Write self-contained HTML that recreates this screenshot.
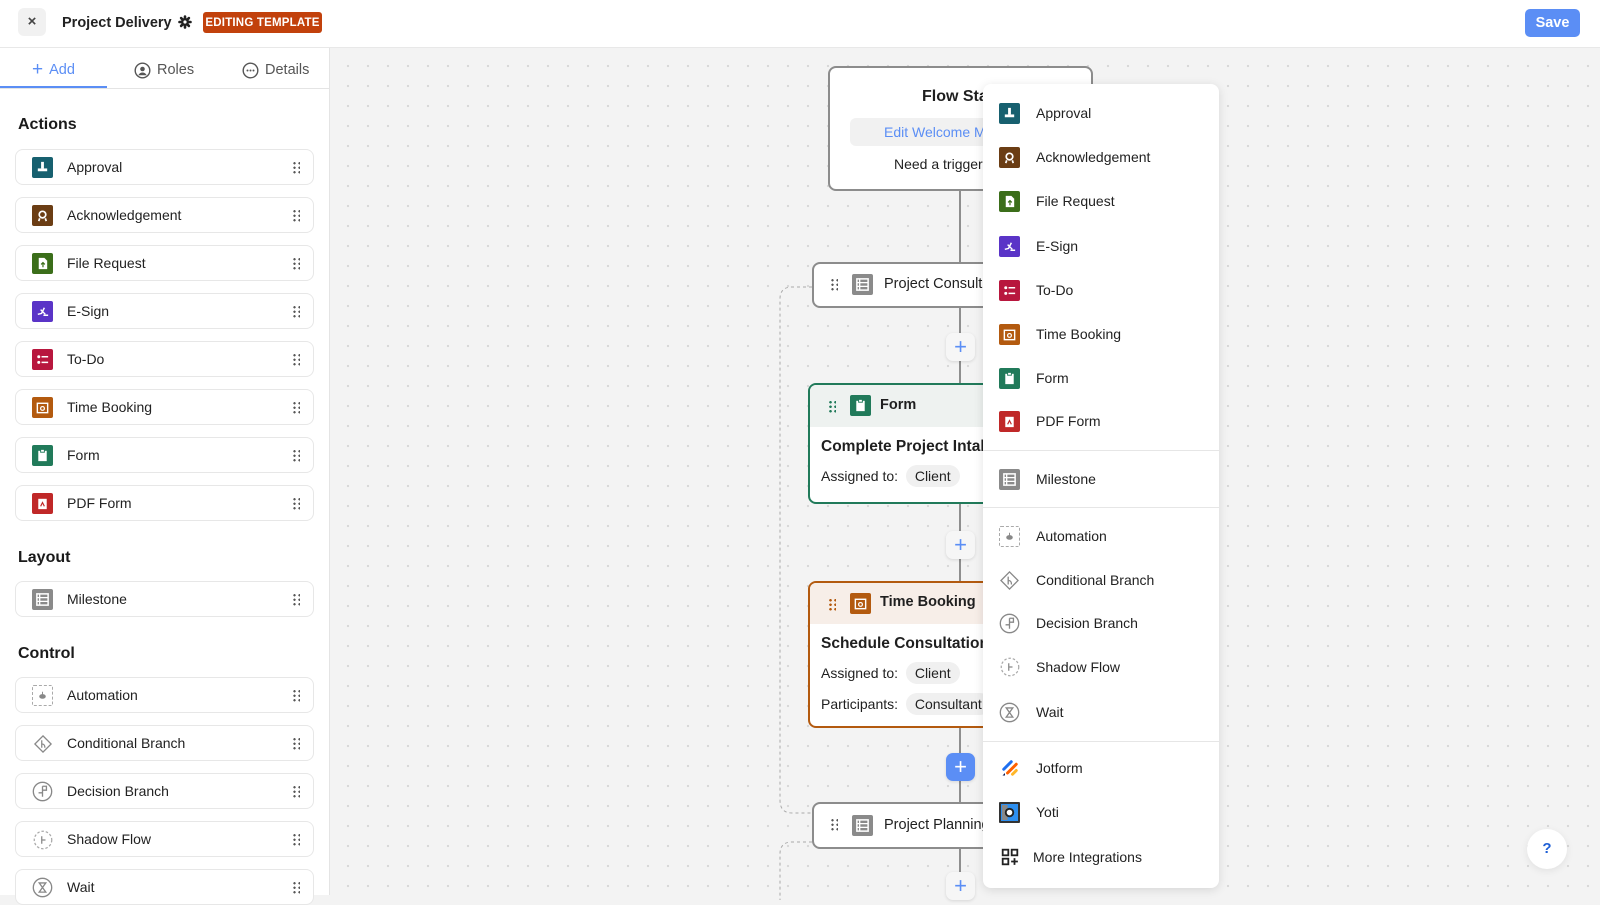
<!DOCTYPE html>
<html><head><meta charset="utf-8">
<style>
*{box-sizing:border-box;margin:0;padding:0}
body{width:1600px;height:895px;overflow:hidden;font-family:"Liberation Sans",Arial,sans-serif;color:#1f1f1f;background:#f3f3f3;position:relative}
.abs{position:absolute}
#hdr{left:0;top:0;width:1600px;height:48px;background:#fff;border-bottom:1px solid #e8e8e8}
#canvas{left:330px;top:48px;width:1270px;height:847px;background-color:#f3f3f3;background-image:radial-gradient(#d6d6d6 1px,transparent 1.3px);background-size:20px 20px;background-position:8px 8px}
#side{left:0;top:48px;width:330px;height:847px;background:#fff;border-right:1px solid #e4e4e4}
.tab{position:absolute;top:2px;height:40px;line-height:40px;font-size:14.5px;color:#555;display:flex;align-items:center;gap:6px}
.sec{position:absolute;left:18px;font-size:16px;font-weight:bold;color:#1a1a1a}
.item{position:absolute;left:15px;width:299px;height:36px;border:1px solid #e7e7e7;border-radius:8px;background:#fff}
.item .ic{position:absolute;left:16px;top:7px}
.item span{position:absolute;left:51px;top:9px;font-size:14px;color:#222}
.drag{position:absolute;right:13px;top:11px;width:8px;height:13px;background-image:radial-gradient(#555 1.1px,transparent 1.4px);background-size:5px 4.5px}
.ic{width:21px;height:21px;border-radius:2px;display:flex;align-items:center;justify-content:center}
.ic svg{width:15px;height:15px}
.menu{left:983px;top:84px;width:236px;height:804px;background:#fff;border-radius:8px;box-shadow:0 2px 10px rgba(0,0,0,.12)}
.mi{position:absolute;left:16px;height:22px;display:flex;align-items:center}
.mi span{position:absolute;left:37px;font-size:14px;color:#222;white-space:nowrap}
.mdiv{position:absolute;left:0;width:236px;height:1px;background:#e6e6e6}
.card{position:absolute;background:#fff;border:2px solid #8c8c8c;border-radius:8px;overflow:hidden}
.vl{position:absolute;left:959px;width:2px;background:#8e8e8e}
.plus{position:absolute;left:946px;width:29px;height:28px;border-radius:7px;background:#f6f6f6;box-shadow:0 1px 3px rgba(0,0,0,.12);color:#5b8ef5;font-size:22px;line-height:27px;text-align:center;font-weight:300}
.chip{display:inline-block;background:#f0f0f0;border-radius:12px;padding:3px 9px;color:#222}
</style></head><body>

<div id="canvas" class="abs"></div>

<svg class="abs" style="left:770px;top:280px" width="60" height="620">
<path d="M42 7 H22 Q10 7 10 19 V520 Q10 533 22 533 H42" fill="none" stroke="#aaa" stroke-dasharray="3 3" stroke-width="1"/>
<path d="M42 562 H22 Q10 562 10 574 V620" fill="none" stroke="#aaa" stroke-dasharray="3 3" stroke-width="1"/>
</svg>

<div class="vl" style="top:191px;height:71px"></div>
<div class="vl" style="top:308px;height:75px"></div>
<div class="vl" style="top:504px;height:77px"></div>
<div class="vl" style="top:728px;height:74px"></div>
<div class="vl" style="top:849px;height:46px"></div>
<div class="plus" style="top:333px">+</div>
<div class="plus" style="top:531px">+</div>
<div class="plus" style="top:753px;background:#5b8ef5;color:#fff">+</div>
<div class="plus" style="top:872px">+</div>

<div class="card" style="left:828px;top:66px;width:265px;height:125px;border-color:#8c8c8c">
 <div class="abs" style="left:92px;top:20px;font-size:16px;font-weight:bold">Flow Start</div>
 <div class="abs" style="left:20px;top:50px;width:225px;height:28px;background:#f1f1f1;border-radius:6px;color:#5b8ef5;font-size:14px;line-height:28px;padding-left:34px">Edit Welcome Message</div>
 <div class="abs" style="left:64px;top:88px;font-size:14px">Need a trigger?</div>
</div>

<div class="card" style="left:812px;top:262px;width:296px;height:46px">
 <div class="drag" style="left:16px;top:14px;right:auto"></div>
 <div class="ic abs" style="left:38px;top:10px;background:#8a8a8a"><svg viewBox="0 0 16 16"><rect x="2" y="2" width="12" height="12" fill="none" stroke="#fff" stroke-width="1.6"/><path d="M2 6h12M2 10h12M5 2v12" stroke="#fff" stroke-width="1.4"/></svg></div>
 <div class="abs" style="left:70px;top:12px;font-size:14.5px">Project Consultation</div>
</div>

<div class="card" style="left:808px;top:383px;width:304px;height:121px;border-color:#217a5a">
 <div class="abs" style="left:0;top:0;width:304px;height:42px;background:#eef2f0"></div>
 <div class="drag" style="left:18px;top:15px;right:auto;background-image:radial-gradient(#217a5a 1.2px,transparent 1.5px)"></div>
 <div class="ic abs" style="left:40px;top:10px;background:#217a5a"><svg viewBox="0 0 16 16"><rect x="3.5" y="3" width="9" height="11" fill="#fff"/><rect x="6" y="1.5" width="4" height="3" fill="#fff" stroke="#217a5a"/></svg></div>
 <div class="abs" style="left:70px;top:12px;font-size:14.5px;font-weight:bold">Form</div>
 <div class="abs" style="left:11px;top:53px;font-size:15.5px;font-weight:bold">Complete Project Intake</div>
 <div class="abs" style="left:11px;top:80px;font-size:14px">Assigned to: &nbsp;<span class="chip">Client</span></div>
</div>

<div class="card" style="left:808px;top:581px;width:304px;height:147px;border-color:#b35a0f">
 <div class="abs" style="left:0;top:0;width:304px;height:41px;background:#f7eee8"></div>
 <div class="drag" style="left:18px;top:15px;right:auto;background-image:radial-gradient(#b35a0f 1.2px,transparent 1.5px)"></div>
 <div class="ic abs" style="left:40px;top:10px;background:#b35a0f"><svg viewBox="0 0 16 16"><rect x="2.5" y="3.5" width="11" height="10" fill="none" stroke="#fff" stroke-width="1.5"/><circle cx="8" cy="9" r="2" fill="none" stroke="#fff" stroke-width="1.3"/></svg></div>
 <div class="abs" style="left:70px;top:11px;font-size:14.5px;font-weight:bold">Time Booking</div>
 <div class="abs" style="left:11px;top:52px;font-size:15.5px;font-weight:bold">Schedule Consultation</div>
 <div class="abs" style="left:11px;top:79px;font-size:14px">Assigned to: &nbsp;<span class="chip">Client</span></div>
 <div class="abs" style="left:11px;top:110px;font-size:14px">Participants: &nbsp;<span class="chip">Consultant</span></div>
</div>

<div class="card" style="left:812px;top:802px;width:296px;height:47px">
 <div class="drag" style="left:16px;top:14px;right:auto"></div>
 <div class="ic abs" style="left:38px;top:11px;background:#8a8a8a"><svg viewBox="0 0 16 16"><rect x="2" y="2" width="12" height="12" fill="none" stroke="#fff" stroke-width="1.6"/><path d="M2 6h12M2 10h12M5 2v12" stroke="#fff" stroke-width="1.4"/></svg></div>
 <div class="abs" style="left:70px;top:13px;font-size:14.5px">Project Planning</div>
</div>

<div id="hdr" class="abs">
 <div class="abs" style="left:18px;top:8px;width:28px;height:28px;background:#f1f1f1;border-radius:6px;text-align:center;line-height:28px;font-size:15px;color:#444;font-weight:bold">×</div>
 <div class="abs" style="left:62px;top:15px;font-size:14.5px;font-weight:bold;color:#222">Project Delivery</div>
 <svg class="abs" style="left:178px;top:15px" width="14" height="14" viewBox="0 0 14 14"><g stroke="#222" stroke-width="2.6" stroke-linecap="round"><path d="M7 1.5v11M1.5 7h11M3.1 3.1l7.8 7.8M10.9 3.1l-7.8 7.8"/></g><circle cx="7" cy="7" r="4" fill="#222"/><circle cx="7" cy="7" r="1.6" fill="#fff"/></svg>
 <div class="abs" style="left:203px;top:12px;width:119px;height:21px;background:#c2410c;border-radius:3px;color:#fff;font-size:11.5px;font-weight:bold;display:flex;align-items:center;justify-content:center;letter-spacing:.2px">EDITING TEMPLATE</div>
 <div class="abs" style="left:1525px;top:9px;width:55px;height:28px;background:#5b8ef5;border-radius:5px;color:#fff;font-size:14.5px;font-weight:bold;line-height:28px;text-align:center">Save</div>
</div>

<div id="side" class="abs">
 <div class="tab" style="left:32px;color:#5b8ef5"><span style="font-size:19px;font-weight:300">+</span> Add</div>
 <div class="abs" style="left:0;top:38px;width:107px;height:3px;background:#5b8ef5"></div>
 <div class="abs" style="left:0;top:40px;width:330px;height:1px;background:#e4e4e4"></div>
 <div class="tab" style="left:134px"><svg width="17" height="17" viewBox="0 0 17 17"><circle cx="8.5" cy="8.5" r="7.3" fill="none" stroke="#555" stroke-width="1.4"/><circle cx="8.5" cy="7" r="2.3" fill="#555"/><path d="M4.3 13.3c1-2 2.5-2.8 4.2-2.8s3.2.8 4.2 2.8" fill="#555"/></svg>Roles</div>
 <div class="tab" style="left:242px"><svg width="17" height="17" viewBox="0 0 17 17"><circle cx="8.5" cy="8.5" r="7.3" fill="none" stroke="#555" stroke-width="1.4"/><circle cx="5.5" cy="8.5" r="1" fill="#555"/><circle cx="8.5" cy="8.5" r="1" fill="#555"/><circle cx="11.5" cy="8.5" r="1" fill="#555"/></svg>Details</div>

 <div class="sec" style="top:68px">Actions</div>
 <div class="item" style="top:101px"><div class="ic" style="background:#17606f"><svg viewBox="0 0 16 16"><rect x="6.5" y="2" width="3" height="7" fill="#fff"/><rect x="3" y="9" width="10" height="3" fill="#fff"/></svg></div><span>Approval</span><div class="drag"></div></div>
 <div class="item" style="top:149px"><div class="ic" style="background:#6b3d14"><svg viewBox="0 0 16 16"><circle cx="8" cy="7" r="3.5" fill="none" stroke="#fff" stroke-width="1.8"/><path d="M5 11l-1 3M11 11l1 3" stroke="#fff" stroke-width="1.8"/></svg></div><span>Acknowledgement</span><div class="drag"></div></div>
 <div class="item" style="top:197px"><div class="ic" style="background:#3b6e1a"><svg viewBox="0 0 16 16"><path d="M4 2h6l3 3v9H4z" fill="#fff"/><path d="M8.5 12V7M6.5 9l2-2 2 2" stroke="#3b6e1a" stroke-width="1.3" fill="none"/></svg></div><span>File Request</span><div class="drag"></div></div>
 <div class="item" style="top:245px"><div class="ic" style="background:#5a34c7"><svg viewBox="0 0 16 16"><path d="M3 11l4-1 3-6M6 6l5 5M9 12h5" stroke="#fff" stroke-width="1.5" fill="none"/></svg></div><span>E-Sign</span><div class="drag"></div></div>
 <div class="item" style="top:293px"><div class="ic" style="background:#b8173e"><svg viewBox="0 0 16 16"><circle cx="4" cy="5" r="1.6" fill="#fff"/><circle cx="4" cy="11" r="1.6" fill="#fff"/><path d="M7 5h7M7 11h7" stroke="#fff" stroke-width="1.6"/></svg></div><span>To-Do</span><div class="drag"></div></div>
 <div class="item" style="top:341px"><div class="ic" style="background:#b35a0f"><svg viewBox="0 0 16 16"><rect x="2.5" y="3.5" width="11" height="10" fill="none" stroke="#fff" stroke-width="1.5"/><circle cx="8" cy="9" r="2" fill="none" stroke="#fff" stroke-width="1.3"/></svg></div><span>Time Booking</span><div class="drag"></div></div>
 <div class="item" style="top:389px"><div class="ic" style="background:#217a5a"><svg viewBox="0 0 16 16"><rect x="3.5" y="3" width="9" height="11" fill="#fff"/><rect x="6" y="1.5" width="4" height="3" fill="#fff" stroke="#217a5a"/></svg></div><span>Form</span><div class="drag"></div></div>
 <div class="item" style="top:437px"><div class="ic" style="background:#c02828"><svg viewBox="0 0 16 16"><rect x="3.5" y="3" width="9" height="11" fill="#fff"/><path d="M6 11l2-4 2 4" stroke="#c02828" stroke-width="1.2" fill="none"/></svg></div><span>PDF Form</span><div class="drag"></div></div>

 <div class="sec" style="top:501px">Layout</div>
 <div class="item" style="top:533px"><div class="ic" style="background:#8a8a8a"><svg viewBox="0 0 16 16"><rect x="2" y="2" width="12" height="12" fill="none" stroke="#fff" stroke-width="1.6"/><path d="M2 6h12M2 10h12M5 2v12" stroke="#fff" stroke-width="1.4"/></svg></div><span>Milestone</span><div class="drag"></div></div>

 <div class="sec" style="top:597px">Control</div>
 <div class="item" style="top:629px"><div class="ic" style="border:1px dashed #aaa"><svg viewBox="0 0 16 16"><ellipse cx="8" cy="9" rx="3.5" ry="2.5" fill="#888"/><path d="M8 4v3" stroke="#888"/></svg></div><span>Automation</span><div class="drag"></div></div>
 <div class="item" style="top:677px"><div class="ic"><svg viewBox="0 0 16 16" style="width:20px;height:20px"><path d="M8 1.5L14.5 8 8 14.5 1.5 8z" fill="none" stroke="#888"/><path d="M7 5v6M7 8c2 0 2.5 1 2.5 3" stroke="#888" fill="none"/></svg></div><span>Conditional Branch</span><div class="drag"></div></div>
 <div class="item" style="top:725px"><div class="ic"><svg viewBox="0 0 16 16" style="width:21px;height:21px"><circle cx="8" cy="8" r="7" fill="none" stroke="#888"/><path d="M8 4v8M8 4h3v3H8M5 9h3" stroke="#888" fill="none"/></svg></div><span>Decision Branch</span><div class="drag"></div></div>
 <div class="item" style="top:773px"><div class="ic"><svg viewBox="0 0 16 16" style="width:20px;height:20px"><circle cx="8" cy="8" r="7" fill="none" stroke="#aaa" stroke-dasharray="2 1.5"/><path d="M7 5v6M7 8h3" stroke="#888"/></svg></div><span>Shadow Flow</span><div class="drag"></div></div>
 <div class="item" style="top:821px"><div class="ic"><svg viewBox="0 0 16 16" style="width:21px;height:21px"><circle cx="8" cy="8" r="7" fill="none" stroke="#888"/><path d="M5.5 4.5h5L8 8l2.5 3.5h-5L8 8z" fill="none" stroke="#888"/></svg></div><span>Wait</span><div class="drag"></div></div>
</div>

<div class="menu abs">
 <div class="mi" style="top:18px"><div class="ic" style="background:#17606f"><svg viewBox="0 0 16 16"><rect x="6.5" y="2" width="3" height="7" fill="#fff"/><rect x="3" y="9" width="10" height="3" fill="#fff"/></svg></div><span>Approval</span></div>
 <div class="mi" style="top:62px"><div class="ic" style="background:#6b3d14"><svg viewBox="0 0 16 16"><circle cx="8" cy="7" r="3.5" fill="none" stroke="#fff" stroke-width="1.8"/><path d="M5 11l-1 3M11 11l1 3" stroke="#fff" stroke-width="1.8"/></svg></div><span>Acknowledgement</span></div>
 <div class="mi" style="top:106px"><div class="ic" style="background:#3b6e1a"><svg viewBox="0 0 16 16"><path d="M4 2h6l3 3v9H4z" fill="#fff"/><path d="M8.5 12V7M6.5 9l2-2 2 2" stroke="#3b6e1a" stroke-width="1.3" fill="none"/></svg></div><span>File Request</span></div>
 <div class="mi" style="top:151px"><div class="ic" style="background:#5a34c7"><svg viewBox="0 0 16 16"><path d="M3 11l4-1 3-6M6 6l5 5M9 12h5" stroke="#fff" stroke-width="1.5" fill="none"/></svg></div><span>E-Sign</span></div>
 <div class="mi" style="top:195px"><div class="ic" style="background:#b8173e"><svg viewBox="0 0 16 16"><circle cx="4" cy="5" r="1.6" fill="#fff"/><circle cx="4" cy="11" r="1.6" fill="#fff"/><path d="M7 5h7M7 11h7" stroke="#fff" stroke-width="1.6"/></svg></div><span>To-Do</span></div>
 <div class="mi" style="top:239px"><div class="ic" style="background:#b35a0f"><svg viewBox="0 0 16 16"><rect x="2.5" y="3.5" width="11" height="10" fill="none" stroke="#fff" stroke-width="1.5"/><circle cx="8" cy="9" r="2" fill="none" stroke="#fff" stroke-width="1.3"/></svg></div><span>Time Booking</span></div>
 <div class="mi" style="top:283px"><div class="ic" style="background:#217a5a"><svg viewBox="0 0 16 16"><rect x="3.5" y="3" width="9" height="11" fill="#fff"/><rect x="6" y="1.5" width="4" height="3" fill="#fff" stroke="#217a5a"/></svg></div><span>Form</span></div>
 <div class="mi" style="top:326px"><div class="ic" style="background:#c02828"><svg viewBox="0 0 16 16"><rect x="3.5" y="3" width="9" height="11" fill="#fff"/><path d="M6 11l2-4 2 4" stroke="#c02828" stroke-width="1.2" fill="none"/></svg></div><span>PDF Form</span></div>
 <div class="mdiv" style="top:366px"></div>
 <div class="mi" style="top:384px"><div class="ic" style="background:#8a8a8a"><svg viewBox="0 0 16 16"><rect x="2" y="2" width="12" height="12" fill="none" stroke="#fff" stroke-width="1.6"/><path d="M2 6h12M2 10h12M5 2v12" stroke="#fff" stroke-width="1.4"/></svg></div><span>Milestone</span></div>
 <div class="mdiv" style="top:423px"></div>
 <div class="mi" style="top:441px"><div class="ic" style="border:1px dashed #aaa"><svg viewBox="0 0 16 16"><ellipse cx="8" cy="9" rx="3.5" ry="2.5" fill="#888"/><path d="M8 4v3" stroke="#888"/></svg></div><span>Automation</span></div>
 <div class="mi" style="top:485px"><div class="ic"><svg viewBox="0 0 16 16" style="width:21px;height:21px"><path d="M8 1.5L14.5 8 8 14.5 1.5 8z" fill="none" stroke="#888"/><path d="M7 5v6M7 8c2 0 2.5 1 2.5 3" stroke="#888" fill="none"/></svg></div><span>Conditional Branch</span></div>
 <div class="mi" style="top:528px"><div class="ic"><svg viewBox="0 0 16 16" style="width:21px;height:21px"><circle cx="8" cy="8" r="7" fill="none" stroke="#888"/><path d="M8 4v8M8 4h3v3H8M5 9h3" stroke="#888" fill="none"/></svg></div><span>Decision Branch</span></div>
 <div class="mi" style="top:572px"><div class="ic"><svg viewBox="0 0 16 16" style="width:20px;height:20px"><circle cx="8" cy="8" r="7" fill="none" stroke="#aaa" stroke-dasharray="2 1.5"/><path d="M7 5v6M7 8h3" stroke="#888"/></svg></div><span>Shadow Flow</span></div>
 <div class="mi" style="top:617px"><div class="ic"><svg viewBox="0 0 16 16" style="width:21px;height:21px"><circle cx="8" cy="8" r="7" fill="none" stroke="#888"/><path d="M5.5 4.5h5L8 8l2.5 3.5h-5L8 8z" fill="none" stroke="#888"/></svg></div><span>Wait</span></div>
 <div class="mdiv" style="top:657px"></div>
 <div class="mi" style="top:673px"><div class="ic"><svg viewBox="0 0 16 16" style="width:20px;height:20px"><path d="M3 9l6-6" stroke="#1e6ff0" stroke-width="2.4" stroke-linecap="round"/><path d="M6 12l7-7" stroke="#ff6100" stroke-width="2.4" stroke-linecap="round"/><path d="M10 13l3-3" stroke="#ffb629" stroke-width="2.4" stroke-linecap="round"/><path d="M2 14l2-2v2z" fill="#0a1551"/></svg></div><span>Jotform</span></div>
 <div class="mi" style="top:717px"><div class="ic" style="background:#2d8ff0;border:2px solid #333;border-radius:1px"><svg viewBox="0 0 16 16"><rect x="0" y="0" width="6" height="16" fill="#888"/><circle cx="8" cy="8" r="4" fill="#fff" stroke="#222" stroke-width="2"/></svg></div><span>Yoti</span></div>
 <div class="mi" style="top:762px"><div class="ic"><svg viewBox="0 0 16 16" style="width:18px;height:18px"><rect x="1.5" y="1.5" width="5" height="5" fill="none" stroke="#222" stroke-width="1.6"/><rect x="9.5" y="1.5" width="5" height="5" fill="none" stroke="#222" stroke-width="1.6"/><rect x="1.5" y="9.5" width="5" height="5" fill="none" stroke="#222" stroke-width="1.6"/><path d="M12 9v6M9 12h6" stroke="#222" stroke-width="1.6"/></svg></div><span style="left:34px">More Integrations</span></div>
</div>

<div class="abs" style="left:1527px;top:829px;width:40px;height:40px;border-radius:50%;background:#fff;box-shadow:0 2px 8px rgba(0,0,0,.08);text-align:center;line-height:40px;color:#1e5fd6;font-weight:bold;font-size:15px">?</div>

</body></html>
